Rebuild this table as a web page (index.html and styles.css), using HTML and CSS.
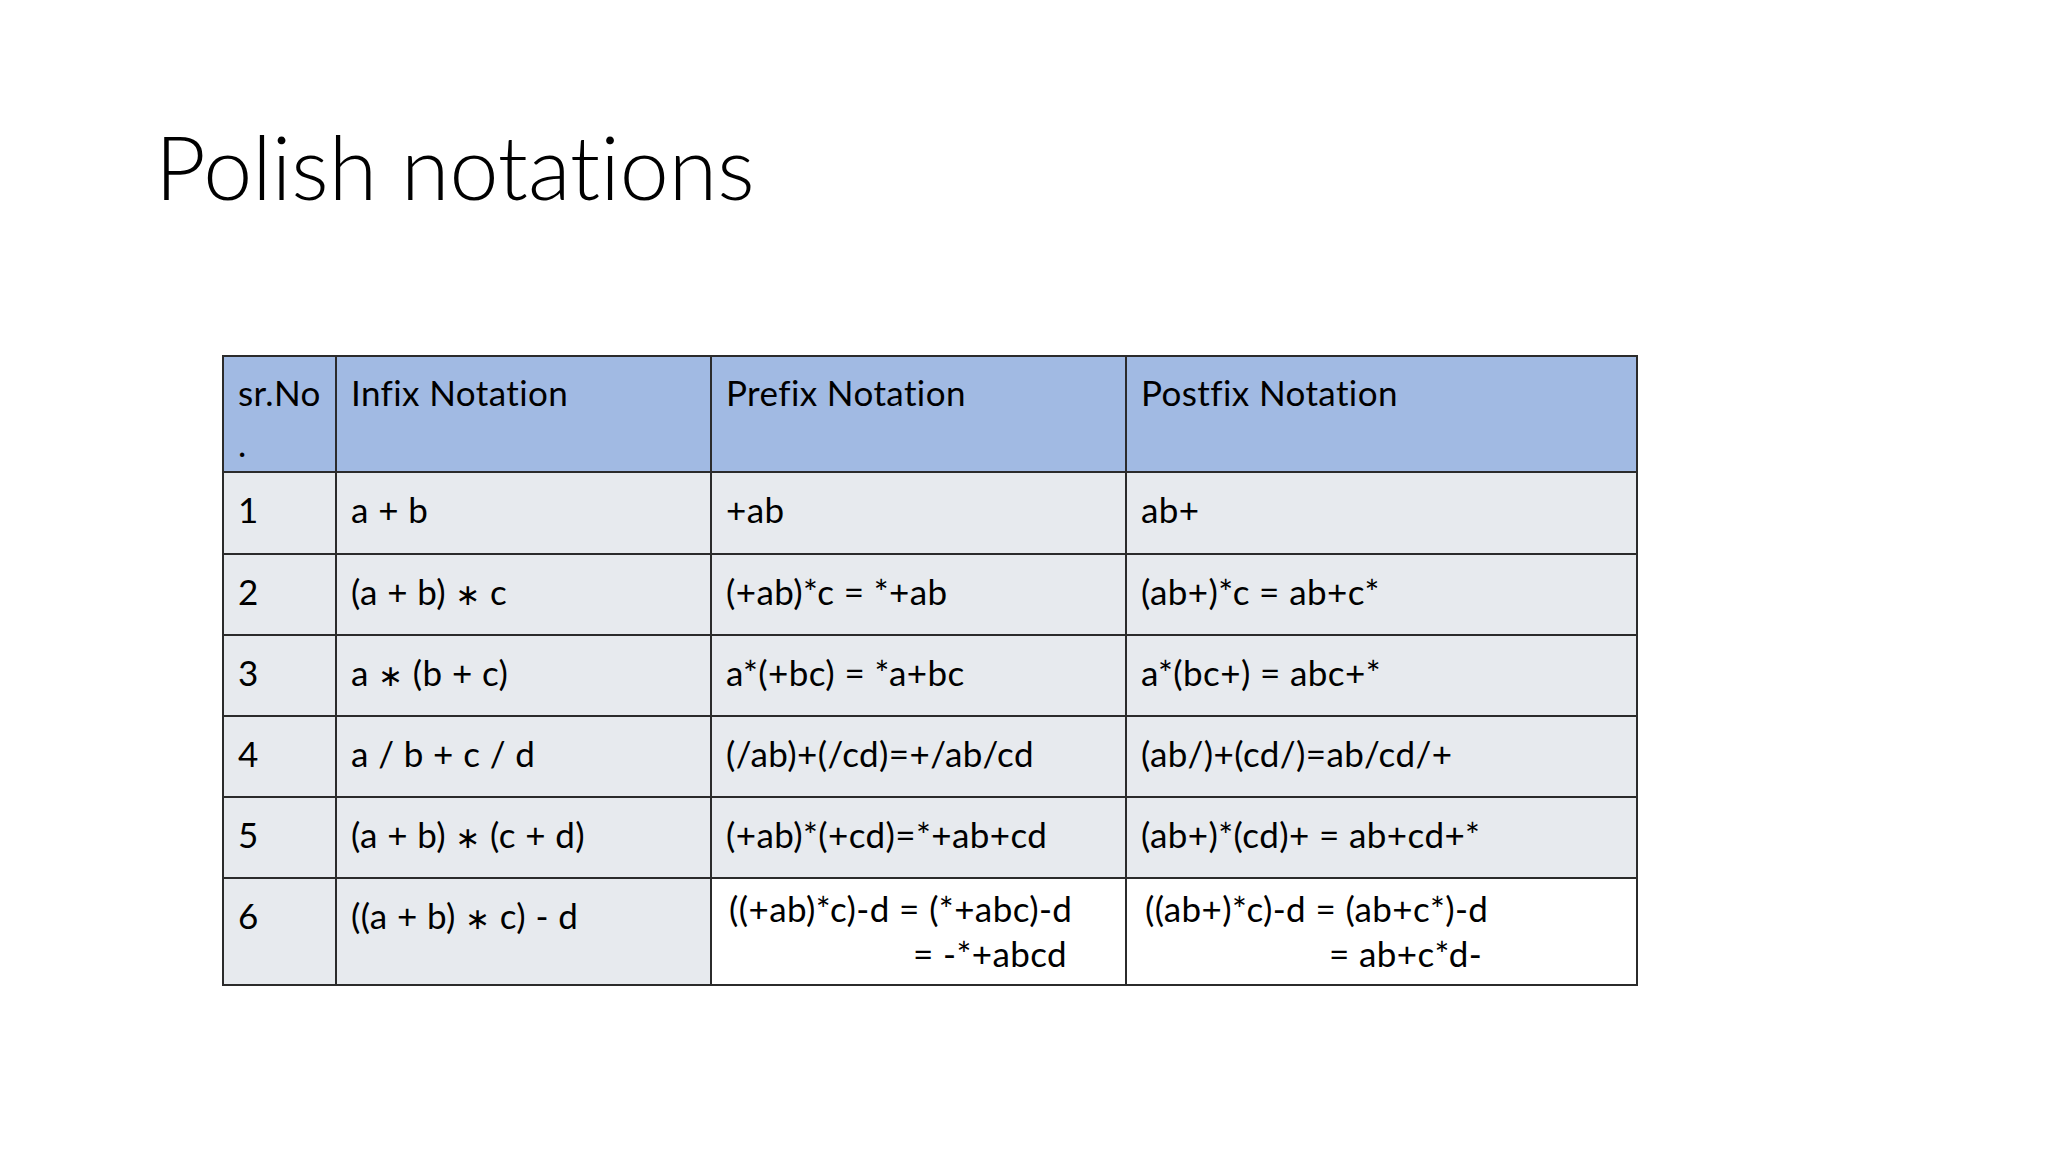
FILE: index.html
```html
<!DOCTYPE html>
<html lang="en">
<head>
<meta charset="utf-8">
<title>Polish notations</title>
<link rel="stylesheet" href="styles.css">
</head>
<body>
<main class="slide">
  <h1 class="title">Polish notations</h1>
  <div class="table">
    <div class="cell head">sr.No<br>.</div>
    <div class="cell head">Infix Notation</div>
    <div class="cell head">Prefix Notation</div>
    <div class="cell head">Postfix Notation</div>

    <div class="cell">1</div>
    <div class="cell">a + b</div>
    <div class="cell">+ab</div>
    <div class="cell">ab+</div>

    <div class="cell">2</div>
    <div class="cell">(a + b) <span class="op">∗</span> c</div>
    <div class="cell">(+ab)*c = *+ab</div>
    <div class="cell">(ab+)*c = ab+c*</div>

    <div class="cell">3</div>
    <div class="cell">a <span class="op">∗</span> (b + c)</div>
    <div class="cell">a*(+bc) = *a+bc</div>
    <div class="cell">a*(bc+) = abc+*</div>

    <div class="cell">4</div>
    <div class="cell">a / b + c / d</div>
    <div class="cell">(/ab)+(/cd)=+/ab/cd</div>
    <div class="cell">(ab/)+(cd/)=ab/cd/+</div>

    <div class="cell">5</div>
    <div class="cell">(a + b) <span class="op">∗</span> (c + d)</div>
    <div class="cell">(+ab)*(+cd)=*+ab+cd</div>
    <div class="cell">(ab+)*(cd)+ = ab+cd+*</div>

    <div class="cell">6</div>
    <div class="cell">((a + b) <span class="op">∗</span> c) - d</div>
    <div class="cell last multi">
      <span class="line">((+ab)*c)-d = (*+abc)-d</span>
      <span class="line cont">= -*+abcd</span>
    </div>
    <div class="cell last multi post">
      <span class="line">((ab+)*c)-d = (ab+c*)-d</span>
      <span class="line cont">= ab+c*d-</span>
    </div>
  </div>
</main>
</body>
</html>
```

FILE: styles.css
```css
html, body {
  margin: 0;
  padding: 0;
  background: #ffffff;
}

.slide {
  width: 2048px;
  height: 1152px;
  box-sizing: border-box;
  padding-top: 122px;
  font-family: "Lato", "Open Sans", sans-serif;
  font-variant-ligatures: none;
  color: #000000;
}

.title {
  margin: 0 0 0 155px;
  font-size: 88px;
  font-weight: 300;
  line-height: 88px;
  letter-spacing: 0;
}

.table {
  margin: 145px 0 0 222px;
  width: 1416px;
  box-sizing: border-box;
  display: grid;
  grid-template-columns: 113px 375px 415px 511px;
  grid-template-rows: 116px 82px 81px 81px 81px 81px 107px;
  border-top: 2px solid #2b2b2b;
  border-left: 2px solid #2b2b2b;
}

.cell {
  box-sizing: border-box;
  border-right: 2px solid #2b2b2b;
  border-bottom: 2px solid #2b2b2b;
  background: #e7eaee;
  padding: 14px 6px 0 14px;
  font-size: 35px;
  line-height: 44px;
  letter-spacing: 0.4px;
  white-space: nowrap;
}

.cell.head {
  background: #a1bae3;
  padding-top: 10px;
  line-height: 51px;
}

.cell.last {
  background: #ffffff;
}

.cell.multi {
  padding-top: 7px;
  padding-left: 17px;
  line-height: 45px;
}

.cell.multi.post {
  padding-left: 18px;
}

.op {
  font-family: "Liberation Sans", "DejaVu Sans", sans-serif;
  font-size: 0.85em;
}

.line {
  display: block;
}

.line.cont {
  padding-left: 184px;
}
```
